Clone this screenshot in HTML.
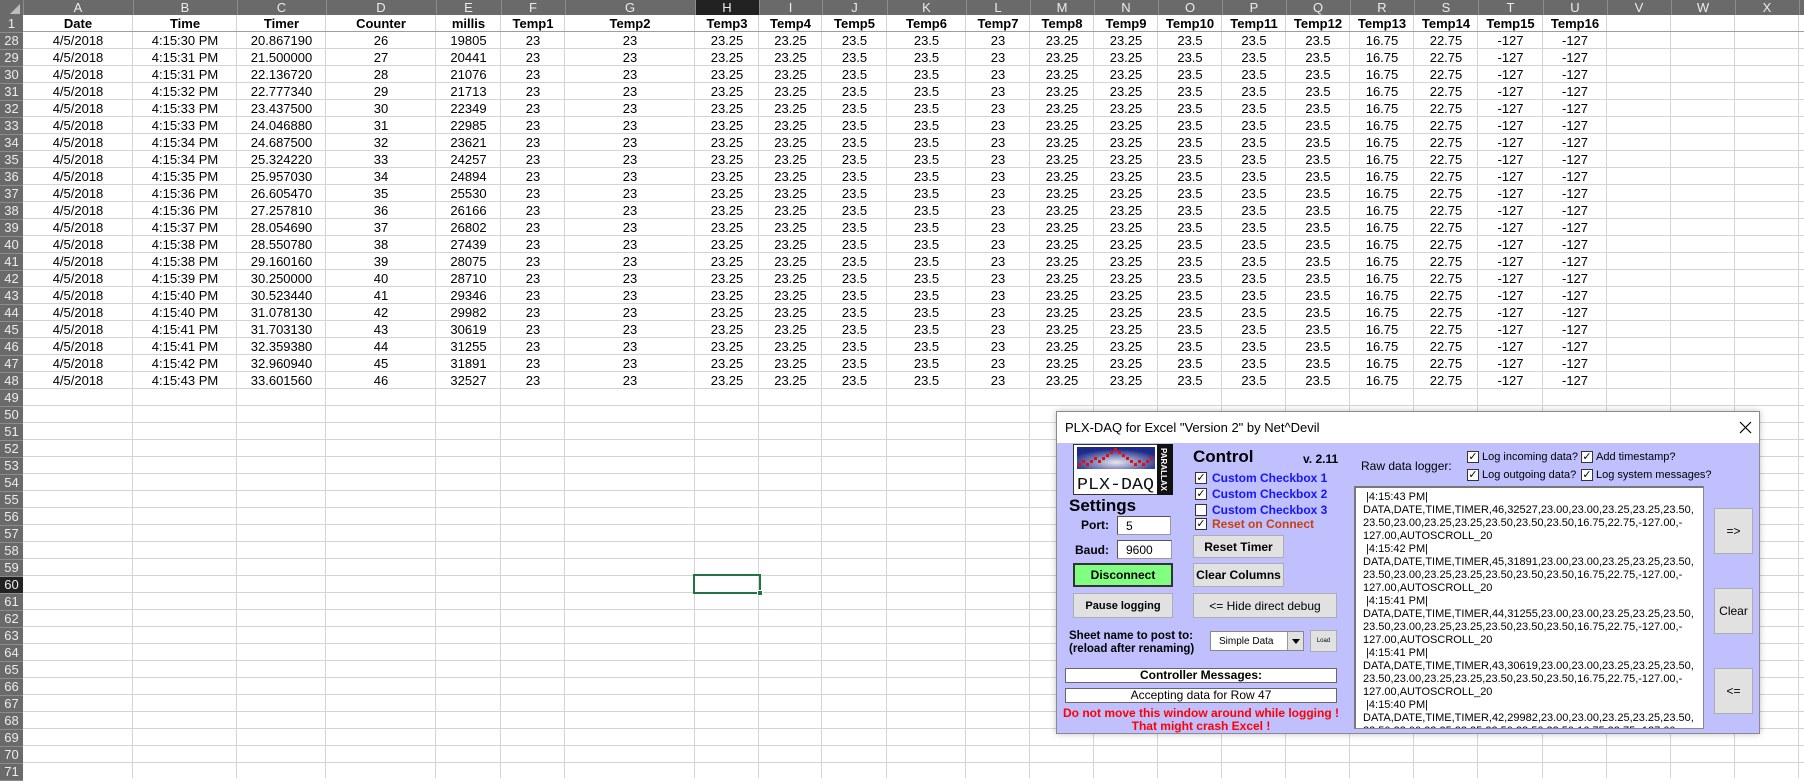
<!DOCTYPE html>
<html><head><meta charset="utf-8">
<style>
*{box-sizing:border-box;margin:0;padding:0}
body{width:1804px;height:778px;overflow:hidden;background:#fff;font-family:"Liberation Sans",Arial,sans-serif;position:relative}
.vl{position:absolute;top:15px;width:1px;height:763px;background:#d4d4d4}
#hl{position:absolute;left:23px;top:15px;width:1781px;height:763px;background:repeating-linear-gradient(to bottom,transparent 0,transparent 16px,#d4d4d4 16px,#d4d4d4 17px)}
table{position:absolute;left:0;top:0;border-collapse:collapse;table-layout:fixed;width:1804px;font-size:13px;z-index:1}
td,th{padding:0;height:17px;text-align:center;white-space:nowrap;overflow:hidden;font-weight:normal;color:#000}
thead th{height:15px;background:#6a6a6a;color:#ececec;border-right:1px solid #8c8c8c;font-size:13px;line-height:15px}
tbody th{background:#6a6a6a;color:#ececec;border-bottom:1px solid #8c8c8c;font-size:13px;text-align:center}
tr.h1 td{font-weight:bold}
thead th.sel,tbody th.sel{background:#222}
#dlg{position:absolute;left:1056px;top:411px;width:704px;height:323px;background:#c0c0ff;border:1px solid #8a8a8a;box-shadow:0 0 6px rgba(0,0,0,.25);z-index:5;font-size:12px}
#dlg>*{position:absolute}
.tb{left:0;top:0;width:702px;height:31px;background:#fff}
.btn{background:#e1e1e1;border:1px solid #adadad;text-align:center;font-weight:bold;font-size:12px;display:flex;align-items:center;justify-content:center}
.cb{width:12px;height:12px;background:#fff;border:1px solid #333;font-size:11px;line-height:10px;text-align:center;color:#000}
.blue{color:#1414ff;font-weight:bold;font-size:12px}
.inp{background:#fff;border:1px solid #999;border-top-color:#555;border-left-color:#555;font-size:12px;padding-left:8px;display:flex;align-items:center}
</style></head><body>
<div id="hl"></div>
<div class="vl" style="left:132px"></div><div class="vl" style="left:236px"></div><div class="vl" style="left:325px"></div><div class="vl" style="left:435px"></div><div class="vl" style="left:500px"></div><div class="vl" style="left:564px"></div><div class="vl" style="left:694px"></div><div class="vl" style="left:758px"></div><div class="vl" style="left:821px"></div><div class="vl" style="left:886px"></div><div class="vl" style="left:965px"></div><div class="vl" style="left:1029px"></div><div class="vl" style="left:1093px"></div><div class="vl" style="left:1157px"></div><div class="vl" style="left:1221px"></div><div class="vl" style="left:1285px"></div><div class="vl" style="left:1349px"></div><div class="vl" style="left:1413px"></div><div class="vl" style="left:1477px"></div><div class="vl" style="left:1542px"></div><div class="vl" style="left:1606px"></div><div class="vl" style="left:1670px"></div><div class="vl" style="left:1734px"></div><div class="vl" style="left:1798px"></div>
<div style="position:absolute;left:23px;top:31px;width:1781px;height:1px;background:#9e9e9e;z-index:2"></div>
<table>
<colgroup><col style="width:23px"><col style="width:110px"><col style="width:104px"><col style="width:89px"><col style="width:110px"><col style="width:65px"><col style="width:64px"><col style="width:130px"><col style="width:64px"><col style="width:63px"><col style="width:65px"><col style="width:79px"><col style="width:64px"><col style="width:64px"><col style="width:64px"><col style="width:64px"><col style="width:64px"><col style="width:64px"><col style="width:64px"><col style="width:64px"><col style="width:65px"><col style="width:64px"><col style="width:64px"><col style="width:64px"><col style="width:64px"><col style="width:5px"></colgroup>
<thead><tr><th><svg width="10" height="10" style="position:relative;top:2px;left:4px"><polygon points="10,0 10,10 0,10" fill="#bdbdbd"/></svg></th><th>A</th><th>B</th><th>C</th><th>D</th><th>E</th><th>F</th><th>G</th><th class="sel">H</th><th>I</th><th>J</th><th>K</th><th>L</th><th>M</th><th>N</th><th>O</th><th>P</th><th>Q</th><th>R</th><th>S</th><th>T</th><th>U</th><th>V</th><th>W</th><th>X</th><th></th></tr></thead>
<tbody>
<tr class="h1"><th>1</th><td>Date</td><td>Time</td><td>Timer</td><td>Counter</td><td>millis</td><td>Temp1</td><td>Temp2</td><td>Temp3</td><td>Temp4</td><td>Temp5</td><td>Temp6</td><td>Temp7</td><td>Temp8</td><td>Temp9</td><td>Temp10</td><td>Temp11</td><td>Temp12</td><td>Temp13</td><td>Temp14</td><td>Temp15</td><td>Temp16</td><td></td><td></td><td></td><td></td></tr>
<tr><th>28</th><td>4/5/2018</td><td>4:15:30 PM</td><td>20.867190</td><td>26</td><td>19805</td><td>23</td><td>23</td><td>23.25</td><td>23.25</td><td>23.5</td><td>23.5</td><td>23</td><td>23.25</td><td>23.25</td><td>23.5</td><td>23.5</td><td>23.5</td><td>16.75</td><td>22.75</td><td>-127</td><td>-127</td><td></td><td></td><td></td><td></td></tr>
<tr><th>29</th><td>4/5/2018</td><td>4:15:31 PM</td><td>21.500000</td><td>27</td><td>20441</td><td>23</td><td>23</td><td>23.25</td><td>23.25</td><td>23.5</td><td>23.5</td><td>23</td><td>23.25</td><td>23.25</td><td>23.5</td><td>23.5</td><td>23.5</td><td>16.75</td><td>22.75</td><td>-127</td><td>-127</td><td></td><td></td><td></td><td></td></tr>
<tr><th>30</th><td>4/5/2018</td><td>4:15:31 PM</td><td>22.136720</td><td>28</td><td>21076</td><td>23</td><td>23</td><td>23.25</td><td>23.25</td><td>23.5</td><td>23.5</td><td>23</td><td>23.25</td><td>23.25</td><td>23.5</td><td>23.5</td><td>23.5</td><td>16.75</td><td>22.75</td><td>-127</td><td>-127</td><td></td><td></td><td></td><td></td></tr>
<tr><th>31</th><td>4/5/2018</td><td>4:15:32 PM</td><td>22.777340</td><td>29</td><td>21713</td><td>23</td><td>23</td><td>23.25</td><td>23.25</td><td>23.5</td><td>23.5</td><td>23</td><td>23.25</td><td>23.25</td><td>23.5</td><td>23.5</td><td>23.5</td><td>16.75</td><td>22.75</td><td>-127</td><td>-127</td><td></td><td></td><td></td><td></td></tr>
<tr><th>32</th><td>4/5/2018</td><td>4:15:33 PM</td><td>23.437500</td><td>30</td><td>22349</td><td>23</td><td>23</td><td>23.25</td><td>23.25</td><td>23.5</td><td>23.5</td><td>23</td><td>23.25</td><td>23.25</td><td>23.5</td><td>23.5</td><td>23.5</td><td>16.75</td><td>22.75</td><td>-127</td><td>-127</td><td></td><td></td><td></td><td></td></tr>
<tr><th>33</th><td>4/5/2018</td><td>4:15:33 PM</td><td>24.046880</td><td>31</td><td>22985</td><td>23</td><td>23</td><td>23.25</td><td>23.25</td><td>23.5</td><td>23.5</td><td>23</td><td>23.25</td><td>23.25</td><td>23.5</td><td>23.5</td><td>23.5</td><td>16.75</td><td>22.75</td><td>-127</td><td>-127</td><td></td><td></td><td></td><td></td></tr>
<tr><th>34</th><td>4/5/2018</td><td>4:15:34 PM</td><td>24.687500</td><td>32</td><td>23621</td><td>23</td><td>23</td><td>23.25</td><td>23.25</td><td>23.5</td><td>23.5</td><td>23</td><td>23.25</td><td>23.25</td><td>23.5</td><td>23.5</td><td>23.5</td><td>16.75</td><td>22.75</td><td>-127</td><td>-127</td><td></td><td></td><td></td><td></td></tr>
<tr><th>35</th><td>4/5/2018</td><td>4:15:34 PM</td><td>25.324220</td><td>33</td><td>24257</td><td>23</td><td>23</td><td>23.25</td><td>23.25</td><td>23.5</td><td>23.5</td><td>23</td><td>23.25</td><td>23.25</td><td>23.5</td><td>23.5</td><td>23.5</td><td>16.75</td><td>22.75</td><td>-127</td><td>-127</td><td></td><td></td><td></td><td></td></tr>
<tr><th>36</th><td>4/5/2018</td><td>4:15:35 PM</td><td>25.957030</td><td>34</td><td>24894</td><td>23</td><td>23</td><td>23.25</td><td>23.25</td><td>23.5</td><td>23.5</td><td>23</td><td>23.25</td><td>23.25</td><td>23.5</td><td>23.5</td><td>23.5</td><td>16.75</td><td>22.75</td><td>-127</td><td>-127</td><td></td><td></td><td></td><td></td></tr>
<tr><th>37</th><td>4/5/2018</td><td>4:15:36 PM</td><td>26.605470</td><td>35</td><td>25530</td><td>23</td><td>23</td><td>23.25</td><td>23.25</td><td>23.5</td><td>23.5</td><td>23</td><td>23.25</td><td>23.25</td><td>23.5</td><td>23.5</td><td>23.5</td><td>16.75</td><td>22.75</td><td>-127</td><td>-127</td><td></td><td></td><td></td><td></td></tr>
<tr><th>38</th><td>4/5/2018</td><td>4:15:36 PM</td><td>27.257810</td><td>36</td><td>26166</td><td>23</td><td>23</td><td>23.25</td><td>23.25</td><td>23.5</td><td>23.5</td><td>23</td><td>23.25</td><td>23.25</td><td>23.5</td><td>23.5</td><td>23.5</td><td>16.75</td><td>22.75</td><td>-127</td><td>-127</td><td></td><td></td><td></td><td></td></tr>
<tr><th>39</th><td>4/5/2018</td><td>4:15:37 PM</td><td>28.054690</td><td>37</td><td>26802</td><td>23</td><td>23</td><td>23.25</td><td>23.25</td><td>23.5</td><td>23.5</td><td>23</td><td>23.25</td><td>23.25</td><td>23.5</td><td>23.5</td><td>23.5</td><td>16.75</td><td>22.75</td><td>-127</td><td>-127</td><td></td><td></td><td></td><td></td></tr>
<tr><th>40</th><td>4/5/2018</td><td>4:15:38 PM</td><td>28.550780</td><td>38</td><td>27439</td><td>23</td><td>23</td><td>23.25</td><td>23.25</td><td>23.5</td><td>23.5</td><td>23</td><td>23.25</td><td>23.25</td><td>23.5</td><td>23.5</td><td>23.5</td><td>16.75</td><td>22.75</td><td>-127</td><td>-127</td><td></td><td></td><td></td><td></td></tr>
<tr><th>41</th><td>4/5/2018</td><td>4:15:38 PM</td><td>29.160160</td><td>39</td><td>28075</td><td>23</td><td>23</td><td>23.25</td><td>23.25</td><td>23.5</td><td>23.5</td><td>23</td><td>23.25</td><td>23.25</td><td>23.5</td><td>23.5</td><td>23.5</td><td>16.75</td><td>22.75</td><td>-127</td><td>-127</td><td></td><td></td><td></td><td></td></tr>
<tr><th>42</th><td>4/5/2018</td><td>4:15:39 PM</td><td>30.250000</td><td>40</td><td>28710</td><td>23</td><td>23</td><td>23.25</td><td>23.25</td><td>23.5</td><td>23.5</td><td>23</td><td>23.25</td><td>23.25</td><td>23.5</td><td>23.5</td><td>23.5</td><td>16.75</td><td>22.75</td><td>-127</td><td>-127</td><td></td><td></td><td></td><td></td></tr>
<tr><th>43</th><td>4/5/2018</td><td>4:15:40 PM</td><td>30.523440</td><td>41</td><td>29346</td><td>23</td><td>23</td><td>23.25</td><td>23.25</td><td>23.5</td><td>23.5</td><td>23</td><td>23.25</td><td>23.25</td><td>23.5</td><td>23.5</td><td>23.5</td><td>16.75</td><td>22.75</td><td>-127</td><td>-127</td><td></td><td></td><td></td><td></td></tr>
<tr><th>44</th><td>4/5/2018</td><td>4:15:40 PM</td><td>31.078130</td><td>42</td><td>29982</td><td>23</td><td>23</td><td>23.25</td><td>23.25</td><td>23.5</td><td>23.5</td><td>23</td><td>23.25</td><td>23.25</td><td>23.5</td><td>23.5</td><td>23.5</td><td>16.75</td><td>22.75</td><td>-127</td><td>-127</td><td></td><td></td><td></td><td></td></tr>
<tr><th>45</th><td>4/5/2018</td><td>4:15:41 PM</td><td>31.703130</td><td>43</td><td>30619</td><td>23</td><td>23</td><td>23.25</td><td>23.25</td><td>23.5</td><td>23.5</td><td>23</td><td>23.25</td><td>23.25</td><td>23.5</td><td>23.5</td><td>23.5</td><td>16.75</td><td>22.75</td><td>-127</td><td>-127</td><td></td><td></td><td></td><td></td></tr>
<tr><th>46</th><td>4/5/2018</td><td>4:15:41 PM</td><td>32.359380</td><td>44</td><td>31255</td><td>23</td><td>23</td><td>23.25</td><td>23.25</td><td>23.5</td><td>23.5</td><td>23</td><td>23.25</td><td>23.25</td><td>23.5</td><td>23.5</td><td>23.5</td><td>16.75</td><td>22.75</td><td>-127</td><td>-127</td><td></td><td></td><td></td><td></td></tr>
<tr><th>47</th><td>4/5/2018</td><td>4:15:42 PM</td><td>32.960940</td><td>45</td><td>31891</td><td>23</td><td>23</td><td>23.25</td><td>23.25</td><td>23.5</td><td>23.5</td><td>23</td><td>23.25</td><td>23.25</td><td>23.5</td><td>23.5</td><td>23.5</td><td>16.75</td><td>22.75</td><td>-127</td><td>-127</td><td></td><td></td><td></td><td></td></tr>
<tr><th>48</th><td>4/5/2018</td><td>4:15:43 PM</td><td>33.601560</td><td>46</td><td>32527</td><td>23</td><td>23</td><td>23.25</td><td>23.25</td><td>23.5</td><td>23.5</td><td>23</td><td>23.25</td><td>23.25</td><td>23.5</td><td>23.5</td><td>23.5</td><td>16.75</td><td>22.75</td><td>-127</td><td>-127</td><td></td><td></td><td></td><td></td></tr>
<tr><th>49</th><td colspan="25"></td></tr>
<tr><th>50</th><td colspan="25"></td></tr>
<tr><th>51</th><td colspan="25"></td></tr>
<tr><th>52</th><td colspan="25"></td></tr>
<tr><th>53</th><td colspan="25"></td></tr>
<tr><th>54</th><td colspan="25"></td></tr>
<tr><th>55</th><td colspan="25"></td></tr>
<tr><th>56</th><td colspan="25"></td></tr>
<tr><th>57</th><td colspan="25"></td></tr>
<tr><th>58</th><td colspan="25"></td></tr>
<tr><th>59</th><td colspan="25"></td></tr>
<tr><th class="sel">60</th><td colspan="25"></td></tr>
<tr><th>61</th><td colspan="25"></td></tr>
<tr><th>62</th><td colspan="25"></td></tr>
<tr><th>63</th><td colspan="25"></td></tr>
<tr><th>64</th><td colspan="25"></td></tr>
<tr><th>65</th><td colspan="25"></td></tr>
<tr><th>66</th><td colspan="25"></td></tr>
<tr><th>67</th><td colspan="25"></td></tr>
<tr><th>68</th><td colspan="25"></td></tr>
<tr><th>69</th><td colspan="25"></td></tr>
<tr><th>70</th><td colspan="25"></td></tr>
<tr><th>71</th><td colspan="25"></td></tr>
</tbody></table>
<div style="position:absolute;left:693px;top:574px;width:68px;height:20px;border:2px solid #217346;z-index:2"></div>
<div style="position:absolute;left:757px;top:590px;width:6px;height:6px;background:#217346;border:1px solid #fff;z-index:3"></div>

<div id="dlg">
<div class="tb"></div>
<div style="left:8px;top:8px;font-size:13px;line-height:16px;color:#000">PLX-DAQ for Excel "Version 2" by Net^Devil</div>
<svg style="left:682px;top:9px" width="13" height="13"><path d="M1 1L12 12M12 1L1 12" stroke="#000" stroke-width="1.2"/></svg>

<svg style="left:16px;top:32px" width="100" height="51" viewBox="0 0 100 51">
<rect x="0.5" y="0.5" width="99" height="50" fill="#fff" stroke="#333"/>
<defs><radialGradient id="g" cx="0.5" cy="0.7" r="0.6"><stop offset="0" stop-color="#e8e8f0"/><stop offset="1" stop-color="#1e2a8a"/></radialGradient></defs>
<rect x="4" y="3" width="78" height="22" fill="url(#g)"/>
<g fill="#e01010"><rect x="5" y="19" width="3" height="3"/><rect x="9" y="16" width="3" height="3"/><rect x="13" y="19" width="3" height="3"/><rect x="17" y="16" width="3" height="3"/><rect x="21" y="13" width="3" height="3"/><rect x="25" y="16" width="3" height="3"/><rect x="29" y="13" width="3" height="3"/><rect x="33" y="10" width="3" height="3"/><rect x="37" y="7" width="3" height="3"/><rect x="41" y="4" width="3" height="3"/><rect x="45" y="7" width="3" height="3"/><rect x="49" y="10" width="3" height="3"/><rect x="53" y="13" width="3" height="3"/><rect x="57" y="16" width="3" height="3"/><rect x="61" y="19" width="3" height="3"/><rect x="65" y="16" width="3" height="3"/><rect x="69" y="19" width="3" height="3"/><rect x="73" y="16" width="3" height="3"/><rect x="77" y="13" width="3" height="3"/></g>
<text x="4" y="45" font-family="Liberation Mono,monospace" font-size="17" textLength="77" lengthAdjust="spacingAndGlyphs" fill="#111">PLX-DAQ</text>
<rect x="84" y="0" width="16" height="51" fill="#111"/>
<text x="88" y="4" font-family="Liberation Sans,sans-serif" font-size="8" font-weight="bold" fill="#fff" transform="rotate(90 88 4)">PARALLAX</text>
</svg>

<div style="left:12px;top:85px;font-size:17px;font-weight:bold;line-height:18px">Settings</div>
<div style="left:136px;top:36px;font-size:17px;font-weight:bold;line-height:18px">Control</div>
<div style="left:246px;top:40px;font-size:12px;font-weight:bold;line-height:14px">v. 2.11</div>

<div class="cb" style="left:138px;top:60px">&#10003;</div><div class="blue" style="left:155px;top:59px;line-height:14px">Custom Checkbox 1</div>
<div class="cb" style="left:138px;top:76px">&#10003;</div><div class="blue" style="left:155px;top:75px;line-height:14px">Custom Checkbox 2</div>
<div class="cb" style="left:138px;top:92px"></div><div class="blue" style="left:155px;top:91px;line-height:14px">Custom Checkbox 3</div>
<div class="cb" style="left:138px;top:106px">&#10003;</div><div style="left:155px;top:105px;line-height:14px;font-weight:bold;color:#c84010">Reset on Connect</div>

<div style="left:20px;top:106px;width:32px;text-align:right;font-weight:bold;line-height:14px">Port:</div>
<div class="inp" style="left:60px;top:104px;width:54px;height:19px">5</div>
<div style="left:16px;top:131px;width:36px;text-align:right;font-weight:bold;line-height:14px">Baud:</div>
<div class="inp" style="left:60px;top:128px;width:55px;height:19px">9600</div>

<div class="btn" style="left:16px;top:151px;width:100px;height:24px;background:#80ff80;border:2px solid #333">Disconnect</div>
<div class="btn" style="left:16px;top:181px;width:100px;height:25px;font-size:11px">Pause logging</div>
<div class="btn" style="left:136px;top:123px;width:91px;height:23px">Reset Timer</div>
<div class="btn" style="left:136px;top:151px;width:91px;height:24px">Clear Columns</div>
<div class="btn" style="left:136px;top:181px;width:144px;height:25px;font-weight:normal;font-size:12px">&lt;= Hide direct debug</div>

<div style="left:12px;top:218px;font-weight:bold;font-size:11.5px;line-height:13px">Sheet name to post to:<br>(reload after renaming)</div>
<div class="inp" style="left:153px;top:219px;width:94px;height:20px;font-size:10px;border:1px solid #888">Simple Data</div>
<div style="left:230px;top:220px;width:16px;height:18px;background:#e1e1e1;border-left:1px solid #999"><svg width="16" height="18"><polygon points="4,7 12,7 8,12" fill="#000"/></svg></div>
<div class="btn" style="left:253px;top:218px;width:27px;height:22px;font-size:6px;font-weight:normal">Load</div>

<div style="left:8px;top:256px;width:272px;height:15px;background:#fff;border:1px solid #666;text-align:center;font-weight:bold;line-height:13px">Controller Messages:</div>
<div style="left:8px;top:276px;width:272px;height:15px;background:#fff;border:1px solid #666;text-align:center;line-height:13px">Accepting data for Row 47</div>
<div style="left:0px;top:295px;width:288px;text-align:center;color:#f00;font-weight:bold;font-size:12px;line-height:13px">Do not move this window around while logging !<br>That might crash Excel !</div>

<div style="left:304px;top:47px;line-height:14px">Raw data logger:</div>
<div class="cb" style="left:410px;top:39px">&#10003;</div><div style="left:425px;top:38px;font-size:11px;line-height:14px">Log incoming data?</div>
<div class="cb" style="left:524px;top:39px">&#10003;</div><div style="left:539px;top:38px;font-size:11px;line-height:14px">Add timestamp?</div>
<div class="cb" style="left:410px;top:57px">&#10003;</div><div style="left:425px;top:56px;font-size:11px;line-height:14px">Log outgoing data?</div>
<div class="cb" style="left:524px;top:57px">&#10003;</div><div style="left:539px;top:56px;font-size:11px;line-height:14px">Log system messages?</div>

<div style="left:297px;top:74px;width:350px;height:243px;background:#fff;border:1px solid #888;border-top:2px solid #777;border-left:2px solid #777;overflow:hidden;padding:3px 0 0 7px;font-size:11px;line-height:13px;white-space:pre"> |4:15:43 PM|
DATA,DATE,TIME,TIMER,46,32527,23.00,23.00,23.25,23.25,23.50,
23.50,23.00,23.25,23.25,23.50,23.50,23.50,16.75,22.75,-127.00,-
127.00,AUTOSCROLL_20
 |4:15:42 PM|
DATA,DATE,TIME,TIMER,45,31891,23.00,23.00,23.25,23.25,23.50,
23.50,23.00,23.25,23.25,23.50,23.50,23.50,16.75,22.75,-127.00,-
127.00,AUTOSCROLL_20
 |4:15:41 PM|
DATA,DATE,TIME,TIMER,44,31255,23.00,23.00,23.25,23.25,23.50,
23.50,23.00,23.25,23.25,23.50,23.50,23.50,16.75,22.75,-127.00,-
127.00,AUTOSCROLL_20
 |4:15:41 PM|
DATA,DATE,TIME,TIMER,43,30619,23.00,23.00,23.25,23.25,23.50,
23.50,23.00,23.25,23.25,23.50,23.50,23.50,16.75,22.75,-127.00,-
127.00,AUTOSCROLL_20
 |4:15:40 PM|
DATA,DATE,TIME,TIMER,42,29982,23.00,23.00,23.25,23.25,23.50,
23.50,23.00,23.25,23.25,23.50,23.50,23.50,16.75,22.75,-127.00,-</div>

<div class="btn" style="left:657px;top:96px;width:39px;height:46px;font-weight:normal">=&gt;</div>
<div class="btn" style="left:657px;top:176px;width:39px;height:46px;font-weight:normal">Clear</div>
<div class="btn" style="left:657px;top:256px;width:39px;height:46px;font-weight:normal">&lt;=</div>
</div>
</body></html>
